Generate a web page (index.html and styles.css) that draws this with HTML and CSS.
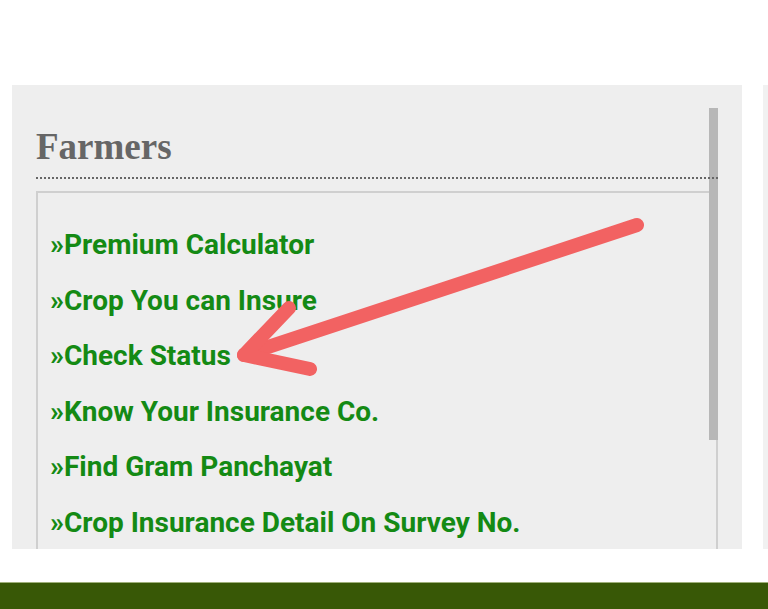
FILE: index.html
```html
<!DOCTYPE html>
<html lang="en">
<head>
    <meta charset="UTF-8">
    <meta name="viewport" content="width=device-width, initial-scale=1.0">
    <title>Farmers</title>
    <link rel="stylesheet" href="styles.css">
</head>
<body>
    <div class="columns">
        <section class="widget">
            <h2 class="widget-title">Farmers</h2>
            <div class="link-box">
                <ul class="links">
                    <li><a href="#">»Premium Calculator</a></li>
                    <li><a href="#">»Crop You can Insure</a></li>
                    <li><a href="#">»Check Status</a></li>
                    <li><a href="#">»Know Your Insurance Co.</a></li>
                    <li><a href="#">»Find Gram Panchayat</a></li>
                    <li><a href="#">»Crop Insurance Detail On Survey No.</a></li>
                </ul>
            </div>
            <div class="scrollbar"></div>
            <svg class="arrow" width="768" height="609" viewBox="0 0 768 609">
                <g fill="none" stroke="#f26262" stroke-width="14" stroke-linecap="round" stroke-linejoin="round">
                    <path d="M637 225 L244 355"/>
                    <path d="M289 308 L244 355 L310 369"/>
                </g>
            </svg>
        </section>
        <section class="widget next"></section>
    </div>
    <footer class="footer"></footer>
</body>
</html>
```

FILE: styles.css
```css
html, body {
    margin: 0;
    padding: 0;
    background: #fff;
}
body {
    width: 768px;
    height: 609px;
    overflow: hidden;
    position: relative;
}
.columns {
    display: flex;
    gap: 21px;
    padding: 85px 0 0 12px;
    height: 464px;
    overflow: hidden;
}
.widget {
    flex: 0 0 730px;
    box-sizing: border-box;
    height: 464px;
    background: #eeeeee;
    padding: 0 24px;
    overflow: hidden;
}
.widget.next {
    flex: 0 0 40px;
    background: #f1f1f1;
}
.widget-title {
    position: relative;
    z-index: 1;
    margin: 0;
    padding-top: 44px;
    padding-bottom: 12px;
    font-family: "Liberation Serif", "DejaVu Serif", serif;
    font-weight: bold;
    font-size: 37px;
    line-height: 36px;
    color: #666;
    border-bottom: 2px dotted #666;
}
.link-box {
    margin-top: 12px;
    border: 2px solid #cfcfcf;
    border-bottom: 0;
    height: 400px;
    padding: 36px 12px 0;
}
.links {
    list-style: none;
    margin: 0;
    padding: 0;
}
.links li {
    height: 55.6px;
}
.links a {
    font-family: Roboto, "Liberation Sans", sans-serif;
    font-weight: bold;
    font-size: 28px;
    line-height: 32px;
    color: #148a14;
    text-decoration: none;
}
.scrollbar {
    position: absolute;
    left: 709px;
    top: 108px;
    width: 9px;
    height: 332px;
    background: #b7b7b7;
}
.arrow {
    position: absolute;
    left: 0;
    top: 0;
    pointer-events: none;
    z-index: 2;
}
.footer {
    position: absolute;
    left: 0;
    right: 0;
    top: 582px;
    height: 27px;
    background: #385806;
    border-top: 1px solid #9fb07a;
}
```
